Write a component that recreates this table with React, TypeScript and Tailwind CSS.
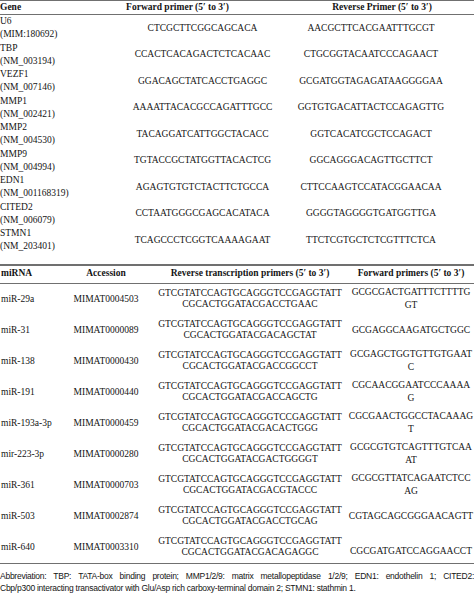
const genes = [
  { name: 'U6', id: '(MIM:180692)', fwd: 'CTCGCTTCGGCAGCACA', rev: 'AACGCTTCACGAATTTGCGT' },
  { name: 'TBP', id: '(NM_003194)', fwd: 'CCACTCACAGACTCTCACAAC', rev: 'CTGCGGTACAATCCCAGAACT' },
  { name: 'VEZF1', id: '(NM_007146)', fwd: 'GGACAGCTATCACCTGAGGC', rev: 'GCGATGGTAGAGATAAGGGGAA' },
  { name: 'MMP1', id: '(NM_002421)', fwd: 'AAAATTACACGCCAGATTTGCC', rev: 'GGTGTGACATTACTCCAGAGTTG' },
  { name: 'MMP2', id: '(NM_004530)', fwd: 'TACAGGATCATTGGCTACACC', rev: 'GGTCACATCGCTCCAGACT' },
  { name: 'MMP9', id: '(NM_004994)', fwd: 'TGTACCGCTATGGTTACACTCG', rev: 'GGCAGGGACAGTTGCTTCT' },
  { name: 'EDN1', id: '(NM_001168319)', fwd: 'AGAGTGTGTCTACTTCTGCCA', rev: 'CTTCCAAGTCCATACGGAACAA' },
  { name: 'CITED2', id: '(NM_006079)', fwd: 'CCTAATGGGCGAGCACATACA', rev: 'GGGGTAGGGGTGATGGTTGA' },
  { name: 'STMN1', id: '(NM_203401)', fwd: 'TCAGCCCTCGGTCAAAAGAAT', rev: 'TTCTCGTGCTCTCGTTTCTCA' },
];

const RT = 'GTCGTATCCAGTGCAGGGTCCGAGGTATT';

const mirnas = [
  { name: 'miR-29a', acc: 'MIMAT0004503', rt: 'CGCACTGGATACGACCTGAAC', fwd: ['GCGCGACTGATTTCTTTTG', 'GT'] },
  { name: 'miR-31', acc: 'MIMAT0000089', rt: 'CGCACTGGATACGACAGCTAT', fwd: ['GCGAGGCAAGATGCTGGC'] },
  { name: 'miR-138', acc: 'MIMAT0000430', rt: 'CGCACTGGATACGACCGGCCT', fwd: ['GCGAGCTGGTGTTGTGAAT', 'C'] },
  { name: 'miR-191', acc: 'MIMAT0000440', rt: 'CGCACTGGATACGACCAGCTG', fwd: ['CGCAACGGAATCCCAAAA', 'G'] },
  { name: 'miR-193a-3p', acc: 'MIMAT0000459', rt: 'CGCACTGGATACGACACTGGG', fwd: ['CGCGAACTGGCCTACAAAG', 'T'] },
  { name: 'mir-223-3p', acc: 'MIMAT0000280', rt: 'CGCACTGGATACGACTGGGGT', fwd: ['GCGCGTGTCAGTTTGTCAA', 'AT'] },
  { name: 'miR-361', acc: 'MIMAT0000703', rt: 'CGCACTGGATACGACGTACCC', fwd: ['GCGCGTTATCAGAATCTCC', 'AG'] },
  { name: 'miR-503', acc: 'MIMAT0002874', rt: 'CGCACTGGATACGACCTGCAG', fwd: ['CGTAGCAGCGGGAACAGTT'] },
  { name: 'miR-640', acc: 'MIMAT0003310', rt: 'CGCACTGGATACGACAGAGGC', fwd: ['CGCGATGATCCAGGAACCT'], low: true },
];

export default function App() {
  return (
    <div className="w-[474px] h-[594px] overflow-hidden bg-white text-[#141414] font-['Liberation_Serif',serif] text-[9.5px]">
      {/* gene primers */}
      <div className="grid grid-cols-[115px_175px_184px] h-[15px] items-center border-y border-[#707070] font-bold leading-none">
        <div>Gene</div>
        <div className="text-center pr-[50px]">Forward primer (5′ to 3′)</div>
        <div className="text-center">Reverse Primer (5′ to 3′)</div>
      </div>
      {genes.map((g) => (
        <div key={g.name} className="grid grid-cols-[115px_175px_184px] h-[26.5px] items-center leading-[13px]">
          <div>
            <div>{g.name}</div>
            <div>{g.id}</div>
          </div>
          <div className="text-center whitespace-nowrap">{g.fwd}</div>
          <div className="text-center whitespace-nowrap pr-[22px]">{g.rev}</div>
        </div>
      ))}

      {/* miRNA primers */}
      <div className="mt-[10px] grid grid-cols-[56px_100px_188px_130px] h-[20px] items-center border-t-2 border-b border-[#707070] font-bold leading-none">
        <div className="pl-px">miRNA</div>
        <div className="text-center">Accession</div>
        <div className="text-center whitespace-nowrap">Reverse transcription primers (5′ to 3′)</div>
        <div className="text-center whitespace-nowrap pl-1">Forward primers (5′ to 3′)</div>
      </div>
      {mirnas.map((m) => (
        <div key={m.name} className="grid grid-cols-[56px_100px_188px_130px] h-[31px] items-center leading-[11px]">
          <div className="pl-px whitespace-nowrap">{m.name}</div>
          <div className="text-center">{m.acc}</div>
          <div className="text-center whitespace-nowrap">
            <div>{RT}</div>
            <div>{m.rt}</div>
          </div>
          <div className={`text-center whitespace-nowrap pl-1 leading-[13px] ${m.low ? 'self-end pb-[5px]' : ''}`}>
            {m.fwd.map((l) => (
              <div key={l}>{l}</div>
            ))}
          </div>
        </div>
      ))}
      <div className="border-t border-[#707070]" />

      <div className="mt-[6px] font-['Liberation_Sans',sans-serif] text-[8.5px] leading-[12px] tracking-[-0.25px]">
        <div className="text-justify [text-align-last:justify]">
          Abbreviation: TBP: TATA-box binding protein; MMP1/2/9: matrix metallopeptidase 1/2/9; EDN1: endothelin 1; CITED2:
        </div>
        <div>Cbp/p300 interacting transactivator with Glu/Asp rich carboxy-terminal domain 2; STMN1: stathmin 1.</div>
      </div>
    </div>
  );
}
